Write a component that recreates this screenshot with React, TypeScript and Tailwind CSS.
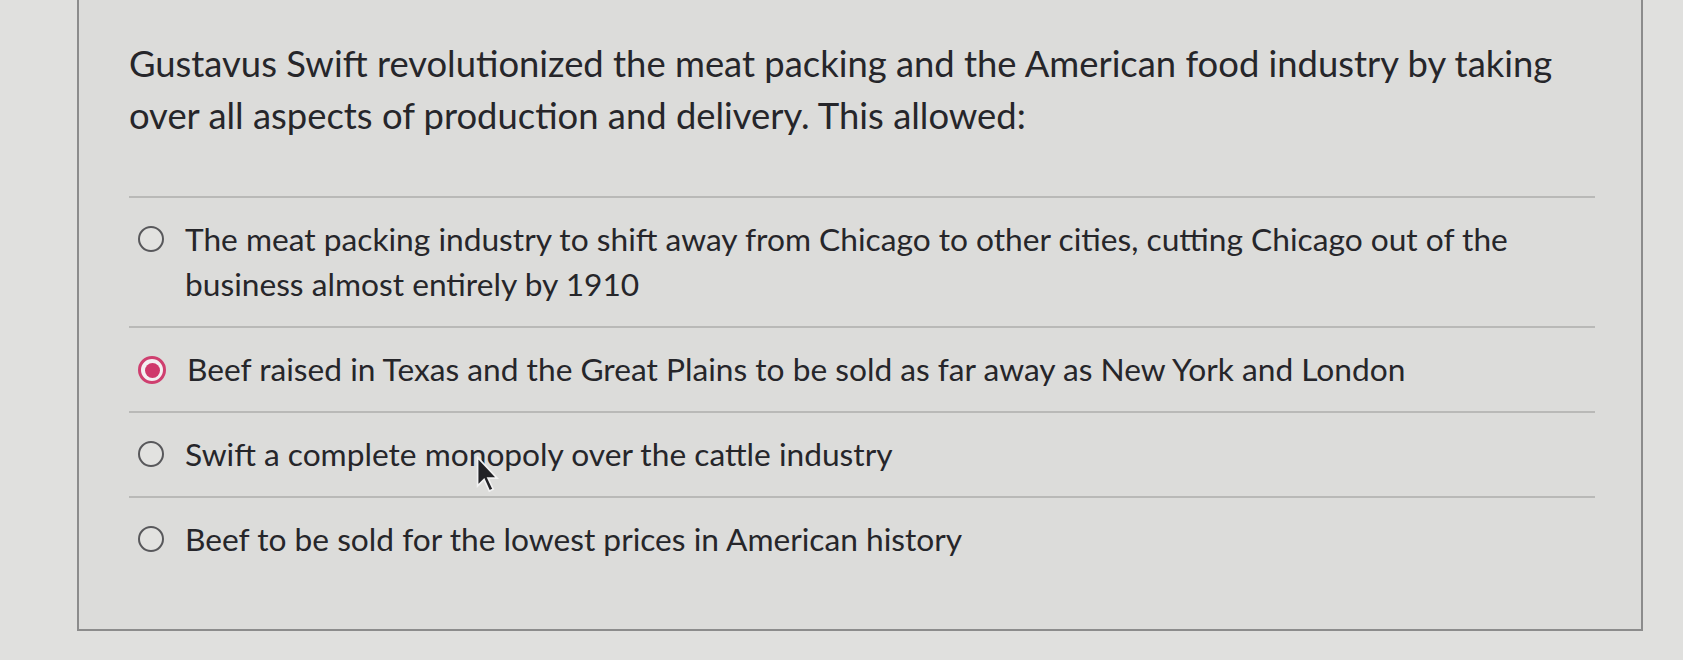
import React from "react";

const options = [
  {
    text: "The meat packing industry to shift away from Chicago to other cities, cutting Chicago out of the business almost entirely by 1910",
    checked: false,
  },
  {
    text: "Beef raised in Texas and the Great Plains to be sold as far away as New York and London",
    checked: true,
  },
  { text: "Swift a complete monopoly over the cattle industry", checked: false },
  { text: "Beef to be sold for the lowest prices in American history", checked: false },
];

function Radio({ checked }: { checked: boolean }) {
  if (checked) {
    return (
      <span className="mt-[9px] flex h-[28px] w-[28px] shrink-0 items-center justify-center rounded-full border-[3px] border-[#cf3f6f] bg-[#f3eff1]">
        <span className="h-[15px] w-[15px] rounded-full bg-[#cf386b]" />
      </span>
    );
  }
  return <span className="mt-[9px] h-[26px] w-[26px] shrink-0 rounded-full border-[2.5px] border-[#58585b] bg-[#e2e2e0]" />;
}

export default function App() {
  return (
    <div
      className="relative h-[660px] w-[1683px] overflow-hidden bg-[#e0e0de] pl-[77px] text-[#26262a]"
      style={{ fontFamily: "Lato, 'Open Sans', sans-serif" }}
    >
      <div className="h-[631px] w-[1566px] border-x-[2px] border-b-[2px] border-[#8c8c8c] bg-[#dcdcda] pl-[50px] pr-[46px] pt-[37px]">
        <p className="text-[36.4px] leading-[52px]">
          Gustavus Swift revolutionized the meat packing and the American food industry by taking over all aspects of
          production and delivery. This allowed:
        </p>

        <div className="mt-[55px] border-t-[2px] border-[#b9b9b7]">
          {options.map((o, i) => (
            <div
              key={i}
              className={`flex gap-[21px] pl-[9px] pr-[40px] py-[19px] ${
                i < options.length - 1 ? "border-b-[2px] border-[#b9b9b7]" : ""
              }`}
            >
              <Radio checked={o.checked} />
              <span className="text-[31.7px] leading-[45px]">{o.text}</span>
            </div>
          ))}
        </div>
      </div>

      {/* mouse cursor */}
      <svg className="absolute left-[475px] top-[456px]" width="26" height="39" viewBox="0 0 20 30">
        <path d="M2 1 L2 23 L7 18 L11 27 L14 25.5 L10 17 L17 17 Z" fill="#222226" stroke="#f2f2f2" strokeWidth="1.3" />
      </svg>
    </div>
  );
}
